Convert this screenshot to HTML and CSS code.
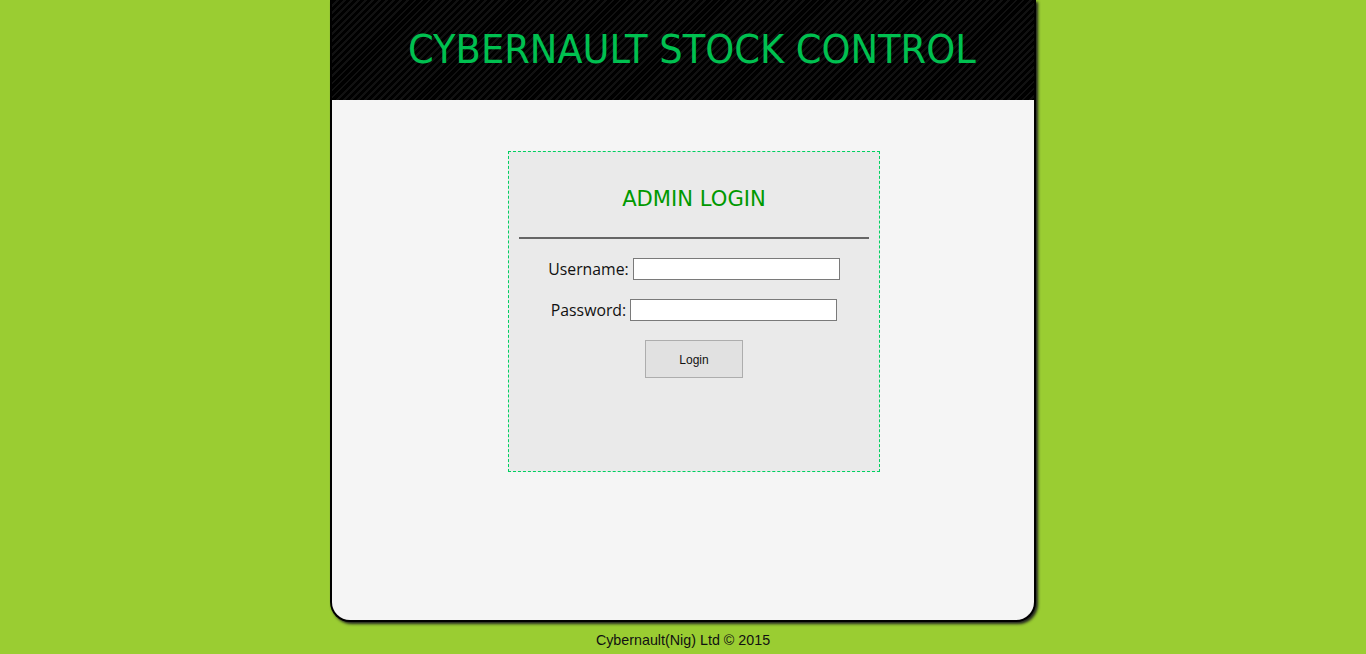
FILE: index.html
```html
<!DOCTYPE html>
<html>
<head>
<meta charset="utf-8">
<link rel="stylesheet" href="styles.css">
</head>
<body>
<div class="wrap">
  <div class="header"><h1>CYBERNAULT STOCK CONTROL</h1></div>
  <div class="content">
    <div class="login">
      <h2>ADMIN LOGIN</h2>
      <div class="rule"></div>
      <div class="row"><label>Username:</label><input type="text" class="field"></div>
      <div class="row"><label>Password:</label><input type="password" class="field"></div>
      <div class="row"><button class="btn">Login</button></div>
    </div>
  </div>
</div>
<div class="footer">Cybernault(Nig) Ltd © 2015</div>
</body>
</html>
```
FILE: styles.css
```css
html, body { margin: 0; padding: 0; }
body { background: #9acd32; font-family: "Liberation Sans", Arial, sans-serif; height: 654px; overflow: hidden; }
.wrap {
  width: 702px; margin: 0 auto;
  border: 2px solid #000; border-top: none;
  border-radius: 0 0 20px 20px;
  background: #f5f5f5;
  box-shadow: 2px 2px 3px #222;
  overflow: hidden;
}
.header {
  height: 100px;
  background: repeating-linear-gradient(135deg, #000 0 3px, #111 3px 5px);
  display: flex; align-items: center; justify-content: center;
}
.header h1 {
  margin: 0; padding-left: 18px; padding-bottom: 2px;
  font-family: "DejaVu Sans", Verdana, sans-serif; font-weight: normal;
  font-size: 39px; color: #00c050;
  transform: scaleX(0.945);
}
.content { height: 520px; padding-top: 51px; box-sizing: border-box; }
.login {
  height: 319px;
  margin-left: 176px;
  border: 1px dashed #00d060; background: #eaeaea;
  padding: 0 10px;
  width: 350px;
}
.login h2 {
  margin: 0; padding-top: 34px; height: 51px;
  text-align: center; font-weight: normal; font-size: 22px;
  color: #009900; font-family: "DejaVu Sans", Verdana, sans-serif;
  transform: scaleX(0.96);
}
.rule { height: 2px; background: #666; margin-bottom: 19px; }
.row { display: flex; justify-content: center; align-items: center; gap: 4px; margin-bottom: 19px; font-family: "Open Sans", "Noto Sans", sans-serif; font-size: 15.8px; color: #111; }
.field { width: 207px; height: 22px; box-sizing: border-box; border: 1px solid #7a7a7a; background: #fff; padding: 0; margin: 0; }
.btn { width: 98px; height: 38px; padding-top: 2px; background: #e1e1e1; border: 1px solid #adadad; font-family: "Liberation Sans", Arial, sans-serif; font-size: 12px; color: #111; }
.footer { text-align: center; font-size: 14.3px; color: #111; margin-top: 10px; }
```
